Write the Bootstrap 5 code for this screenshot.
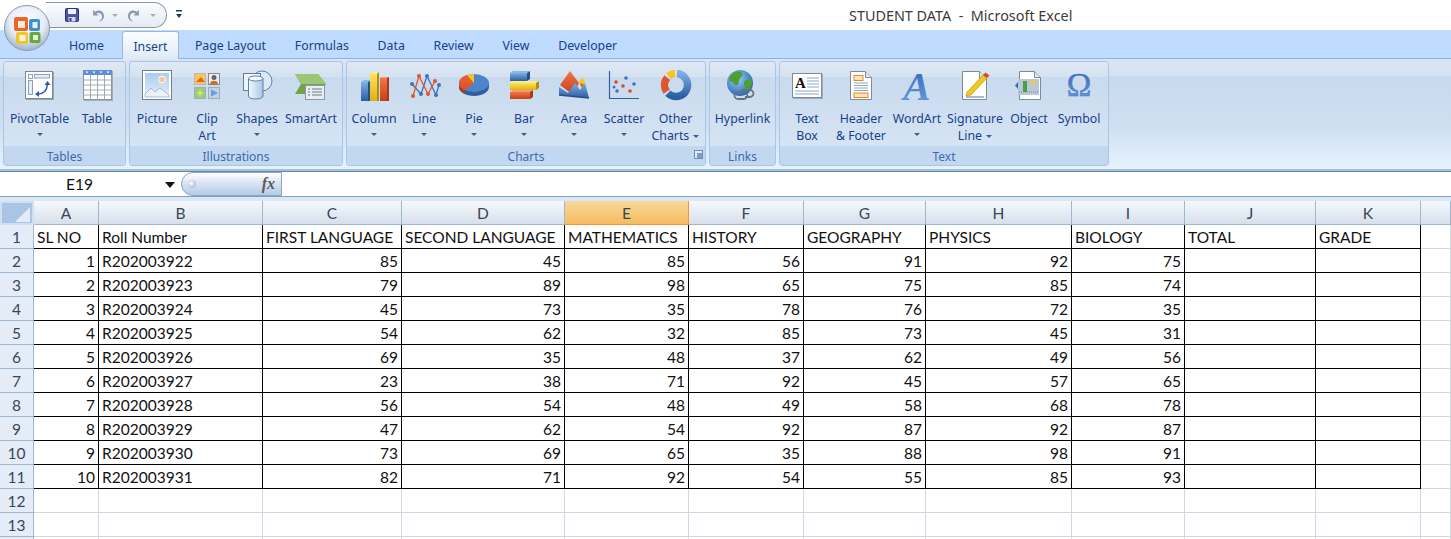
<!doctype html>
<html lang="en">
<head>
<meta charset="utf-8">
<title>STUDENT DATA - Microsoft Excel</title>
<link href="https://cdn.jsdelivr.net/npm/bootstrap@5.3.0/dist/css/bootstrap.min.css" rel="stylesheet">
<style>
html,body{height:539px;overflow:hidden;background:#fff;}
body{font-family:"Noto Sans","Open Sans",sans-serif;}
.titlebar{height:30px;background:#fff;position:relative;}
.title-text{position:absolute;left:849px;top:6px;font-size:14.4px;line-height:20px;color:#3b3b3b;white-space:nowrap;}
.office-btn{position:absolute;left:4px;top:5px;width:46px;height:46px;border-radius:50%;z-index:3;border:1px solid #8a97a8;
 background:radial-gradient(circle at 50% 35%,#ffffff 0,#e6edf6 48%,#a9bbd0 76%,#eef3f9 100%);
 display:flex;align-items:center;justify-content:center;}
.qat{position:absolute;left:46px;top:2px;width:121px;height:26px;border:1px solid #8a97a8;border-left:0;border-radius:0 14px 14px 0;background:linear-gradient(#fbfcfe,#e3ebf5);padding-left:19px;}
.qat-more{position:absolute;left:175px;top:9px;}
.qat .q-undo{margin-left:13px;}
.qat .q-redo{margin-left:10px;}
.qat .caret-d{border-top-color:#a3adba;}
.qat .q-c1{margin:0 0 0 8px;}
.qat .q-c2{margin:0 0 0 10px;}
.tabs{height:28px;background:#bfdbff;padding-left:54.6px;align-items:flex-end;}
.rtab{height:28px;font-size:12.3px;line-height:31px;color:#15428b;padding:0 14.4px;white-space:nowrap;}
.rtab.active{position:relative;z-index:2;height:28px;margin:0 2px -1px 4px;line-height:29px;background:linear-gradient(#fafdff,#dfeaf7);border:1px solid #9ab8d9;border-bottom:0;border-radius:3px 3px 0 0;padding:0 10px;}
.ribbon{height:113px;background:linear-gradient(#d9e5f3 0,#d6e2f1 15%,#c7d9ee 16%,#cfdff1 60%,#e5f3fd 100%);border-top:1px solid #8db2e3;border-bottom:2px solid #a5c0dc;padding:2px 0 0 3px;gap:3px;}
.rgroup{height:105px;background:linear-gradient(#dfe8f5 0,#d6e2f1 14%,#c9daee 15%,#d9e7f6 100%);border:1px solid #a9c6e6;border-radius:3px;overflow:hidden;position:relative;}
.rgroup-body{height:84px;}
.rlabel{height:19px;background:#c2d8f0;text-align:center;font-size:12px;line-height:21px;color:#3e6aaa;position:relative;}
.launcher{position:absolute;right:2px;top:4px;}
.rbtn{flex:0 0 auto;display:flex;flex-direction:column;align-items:center;font-size:12.3px;line-height:17px;color:#15428b;text-align:center;padding-top:5px;}
.rbtn svg{display:block;height:36px;width:36px;margin-bottom:7px;overflow:visible;}
.rbtn .cap{white-space:nowrap;}
.caret-d{display:inline-block;width:0;height:0;border:3px solid transparent;border-top:3px solid #3f5f8f;border-bottom:0;vertical-align:middle;margin:0 0 1px 1px;}
.caret-d.below{margin:6px 0 0;}
.fbar{height:30px;background:#dbe7f5;}
.fbar-row{height:26px;background:#fff;border-top:1px solid #6b87a6;border-bottom:1px solid #7f9fc4;}
.namebox{width:181px;font-family:Lato,sans-serif;font-size:15.5px;line-height:25px;padding-left:66px;position:relative;color:#111;}
.namebox::after{content:"";position:absolute;left:165px;top:10px;border:5px solid transparent;border-top:6px solid #111;border-bottom:0;}
.fx-pill{width:101px;height:24px;border:1px solid #8ba6c6;border-radius:12px 0 0 12px;background:linear-gradient(#fff,#d5e2f3 50%,#b4cbe7 100%);position:relative;}
.fx-dot{position:absolute;left:6px;top:7px;width:8px;height:8px;border-radius:50%;background:radial-gradient(circle at 40% 40%,#fff,#97a4b3);}
.fx{position:absolute;right:6px;top:-1px;font-family:"Liberation Serif",serif;font-style:italic;font-weight:700;font-size:16px;line-height:23px;color:#5b5b5b;}
.sheet{margin:0;border-collapse:separate;border-spacing:0;table-layout:fixed;width:1451px;font-family:Lato,sans-serif;font-size:15.5px;color:#111;}
.sheet th,.sheet td{padding:0 3px;height:24px;line-height:22px;border-right:1px solid #d0d7e5;border-bottom:1px solid #d0d7e5;white-space:nowrap;overflow:hidden;font-weight:400;box-sizing:border-box;}
.sheet thead th{text-align:center;background:linear-gradient(#f6f9fd,#d6dfeb);border-right:1px solid #9eb6ce;border-bottom:1px solid #9eb6ce;color:#3a4656;}
.sheet thead th.sel{background:linear-gradient(#f8d99b,#f3bc5f);border-left:0;border-right:1px solid #f29536;border-bottom:1px solid #f29536;}
.sheet thead th.corner{background:#a9c4e6;border:2px solid #cfe0f3;position:relative;}
.corner-tri{position:absolute;right:2px;bottom:1px;border-style:solid;border-width:0 0 15px 15px;border-color:transparent transparent #e4ecf6 transparent;}
.sheet tbody th{text-align:center;background:#e4ecf7;border-right:1px solid #9eb6ce;border-bottom:1px solid #9eb6ce;color:#3a4656;padding:0;}
.sheet .n{text-align:right;}
.sheet .d{border-right:1px solid #000;border-bottom:1px solid #000;}
</style>
</head>
<body>
<svg width="0" height="0" class="d-block" aria-hidden="true"><defs>
  <linearGradient id="gBlue" x1="0" y1="0" x2="0" y2="1"><stop offset="0" stop-color="#7eaee4"/><stop offset="1" stop-color="#2c5f9f"/></linearGradient>
  <linearGradient id="gYel" x1="0" y1="0" x2="0" y2="1"><stop offset="0" stop-color="#fbe45a"/><stop offset="1" stop-color="#e2ae12"/></linearGradient>
  <linearGradient id="gRed" x1="0" y1="0" x2="0" y2="1"><stop offset="0" stop-color="#f0764a"/><stop offset="1" stop-color="#c63f18"/></linearGradient>
  <linearGradient id="gSky" x1="0" y1="0" x2="0" y2="1"><stop offset="0" stop-color="#a9ccf2"/><stop offset="1" stop-color="#e3eefa"/></linearGradient>
  <radialGradient id="gGlobe" cx=".4" cy=".35" r=".7"><stop offset="0" stop-color="#9ad0f5"/><stop offset="1" stop-color="#1f62b0"/></radialGradient>
  <linearGradient id="gCyl" x1="0" y1="0" x2="1" y2="0"><stop offset="0" stop-color="#f2f7fd"/><stop offset="1" stop-color="#a9c6e8"/></linearGradient>
  <linearGradient id="gA" x1="0" y1="0" x2="0" y2="1"><stop offset="0" stop-color="#2f66b5"/><stop offset="1" stop-color="#6fa0dc"/></linearGradient>
</defs></svg>
<div class="titlebar">
  <div class="office-btn">
    <svg width="34" height="34" viewBox="0 0 34 34">
      <rect x="4" y="6" width="14" height="14" rx="2" fill="#e8672a"/><rect x="8" y="10" width="7" height="7" fill="#fbe9dc"/>
      <rect x="19" y="8" width="11" height="12" rx="2" fill="#3f8fd2"/><rect x="22.500" y="11" width="5" height="6" fill="#e4f1fb"/>
      <rect x="6" y="21" width="12" height="12" rx="2" fill="#f2c230"/><rect x="9.500" y="24" width="6" height="6" fill="#fff7d8"/>
      <rect x="19.500" y="21" width="11" height="11" rx="2" fill="#69a83a"/><rect x="23" y="24" width="5" height="5" fill="#e5f3d6"/>
    </svg>
  </div>
  <div class="qat d-flex align-items-center">
    <svg width="14" height="14" viewBox="0 0 14 14"><rect x=".5" y=".5" width="13" height="13" rx="1" fill="#4a55a8" stroke="#2b3272"/><rect x="3" y="1" width="8" height="5" fill="#eef1fb"/><rect x="3.500" y="9" width="7" height="4.500" fill="#d6d9e8"/><rect x="4.500" y="10" width="2" height="3" fill="#333a80"/></svg>
    <svg class="q-undo" width="12" height="13" viewBox="0 0 12 13"><path d="M1 1v5.500h5.500L4.500 4.500C7 3 10 4.500 10 7.500c0 2-1 3.500-3 5 3.500-.5 5-3 5-5.500C12 2 7 0 3.200 2.800z" fill="#8b9bb0"/></svg>
    <span class="caret-d q-c1"></span>
    <svg class="q-redo" width="12" height="13" viewBox="0 0 12 13"><path d="M11 1v5.500H5.500l2-2C5 3 2 4.500 2 7.500c0 2 1 3.500 3 5C1.500 12 0 9.500 0 7 0 2 5 0 8.800 2.800z" fill="#8b9bb0"/></svg>
    <span class="caret-d q-c2"></span>
  </div>
  <svg class="qat-more" width="8" height="11" viewBox="0 0 8 11"><rect x="1" y="1" width="6" height="1.500" fill="#22386a"/><path d="M1 5h6L4 9z" fill="#22386a"/></svg>
  <div class="title-text">STUDENT DATA&nbsp; -&nbsp; Microsoft Excel</div>
</div>

<div class="tabs d-flex">
  <div class="rtab">Home</div>
  <div class="rtab active">Insert</div>
  <div class="rtab">Page Layout</div>
  <div class="rtab">Formulas</div>
  <div class="rtab">Data</div>
  <div class="rtab">Review</div>
  <div class="rtab">View</div>
  <div class="rtab">Developer</div>
</div>

<div class="ribbon d-flex">
  <!-- Tables -->
  <div class="rgroup" style="width:123px">
    <div class="rgroup-body d-flex">
      <div class="rbtn" style="width:71px"><svg viewBox="0 0 36 36"><rect x="4" y="5" width="28" height="28" fill="#9aa3ae"/><rect x="3.500" y="4.500" width="27" height="27" fill="#fff" stroke="#7f8894"/><rect x="6.500" y="7.500" width="4" height="4" fill="#fff" stroke="#8aa0c0"/><rect x="12.500" y="7.500" width="15" height="3.500" fill="#e6eef8" stroke="#8aa0c0"/><rect x="6.500" y="13.500" width="4" height="14" fill="#e6eef8" stroke="#8aa0c0"/><path d="M16 27c6 0 9-4 9.500-10" fill="none" stroke="#2d5a9c" stroke-width="1.500"/><path d="M22.500 18l3-4 3 4zM17 24l-4 3 4 3z" fill="#2d5a9c"/></svg><span class="cap">PivotTable</span><span class="caret-d below"></span></div>
      <div class="rbtn" style="width:44px"><svg viewBox="0 0 36 36"><rect x="5" y="4" width="29" height="30" fill="#a3abb5"/><rect x="4.500" y="3.500" width="28" height="29" fill="#fff" stroke="#8a9099"/><rect x="4" y="3" width="29" height="5" fill="#5b8fd6"/><path d="M6.500 4.500h3l-1.500 2zM13.500 4.500h3l-1.500 2zM20.500 4.500h3l-1.500 2zM27.500 4.500h3l-1.500 2z" fill="#fff"/><path d="M4 13h29M4 18h29M4 23h29M4 28h29M11.500 8v25M18.500 8v25M25.500 8v25" stroke="#a3a8b0" fill="none"/></svg><span class="cap">Table</span></div>
    </div>
    <div class="rlabel">Tables</div>
  </div>
  <!-- Illustrations -->
  <div class="rgroup" style="width:214px">
    <div class="rgroup-body d-flex">
      <div class="rbtn" style="width:54px"><svg viewBox="0 0 36 36"><rect x="3.500" y="3.500" width="29" height="29" fill="#fff" stroke="#6f7d8c"/><rect x="6" y="6" width="24" height="24" fill="url(#gSky)"/><circle cx="23" cy="12.500" r="3.500" fill="#f5c79a" stroke="#fff"/><path d="M6 27l6-6 4 4 5-4 9 7v2H6z" fill="#eaf1f9" stroke="#8aa6c8" stroke-width=".7"/></svg><span class="cap">Picture</span></div>
      <div class="rbtn" style="width:46px"><svg viewBox="0 0 36 36"><rect x="5.500" y="6.500" width="11" height="11" fill="#f6c558" stroke="#bbb"/><path d="M7 15l5-5 4 5z" fill="#e8632a"/><rect x="19.500" y="6.500" width="11" height="11" fill="#eee" stroke="#888"/><circle cx="25" cy="10.500" r="2.500" fill="#666"/><path d="M21 17c0-4.500 8-4.500 8 0z" fill="#d8682a"/><rect x="5.500" y="20.500" width="11" height="11" fill="#8fcf86" stroke="#aaa"/><path d="M11 22l1 3 3 1-3 1-1 3-1-3-3-1 3-1z" fill="#f6e54c"/><rect x="19.500" y="20.500" width="11" height="11" fill="#b8d4f2" stroke="#aaa"/><path d="M22 22.500l7 3.500-7 3.500z" fill="#6b9ad6"/></svg><span class="cap">Clip</span><span class="cap">Art</span></div>
      <div class="rbtn" style="width:54px"><svg viewBox="0 0 36 36"><circle cx="23" cy="14" r="10" fill="#dbe8f7" stroke="#5f7fa8"/><rect x="4.500" y="6.500" width="17" height="17" fill="#eef4fb" stroke="#5f7fa8"/><path d="M9.500 11.500V29c0 4 14.500 4 14.500 0V11.500z" fill="url(#gCyl)" stroke="#5f7fa8"/><ellipse cx="16.750" cy="11.500" rx="7.250" ry="2.500" fill="#f7fafe" stroke="#5f7fa8"/></svg><span class="cap">Shapes</span><span class="caret-d below"></span></div>
      <div class="rbtn" style="width:54px"><svg viewBox="0 0 36 36"><path d="M2 7h23l8 10-8 10H2l6-10z" fill="#6fa544"/><path d="M2 7h23l8 10H8z" fill="#9cc676"/><rect x="12.500" y="18.500" width="19" height="14" fill="#e8eef3" stroke="#8d9aa5"/><path d="M15 22h2m2 0h10M15 25h2m2 0h10M15 28h2m2 0h10" stroke="#6a7a88"/></svg><span class="cap">SmartArt</span></div>
    </div>
    <div class="rlabel">Illustrations</div>
  </div>
  <!-- Charts -->
  <div class="rgroup" style="width:360px">
    <div class="rgroup-body d-flex">
      <div class="rbtn" style="width:54px"><svg viewBox="0 0 36 36"><rect x="5" y="15" width="7" height="19" fill="url(#gBlue)"/><path d="M5 15l3-2h7l-3 2z" fill="#8ab6e8"/><path d="M12 15l2-1v20h-2z" fill="#234f8a"/><rect x="14" y="7" width="7" height="27" fill="url(#gYel)"/><path d="M14 7l2-2h7l-2 2z" fill="#fbec8a"/><path d="M21 7l2-2v29h-2z" fill="#b28e10"/><rect x="24" y="11" width="7" height="23" fill="url(#gRed)"/><path d="M23 11l3-1h7l-2 1z" fill="#f59a70"/><path d="M31 11l2-1v24h-2z" fill="#a43a18"/></svg><span class="cap">Column</span><span class="caret-d below"></span></div>
      <div class="rbtn" style="width:46px"><svg viewBox="0 0 36 36"><path d="M6 17l9 10 6-18 9 19 3-10" fill="none" stroke="#3c74b8" stroke-width="1.300"/><path d="M7 29l6-20 9 18 7-13" fill="none" stroke="#e0562c" stroke-width="1.300"/><g fill="#3c74b8"><circle cx="6" cy="17" r="2"/><circle cx="15" cy="27" r="2"/><circle cx="21" cy="9" r="2"/><circle cx="30" cy="28" r="2"/><circle cx="33" cy="18" r="2"/></g><g fill="#e0562c"><circle cx="7" cy="29" r="2"/><circle cx="13" cy="9" r="2"/><circle cx="22" cy="27" r="2"/><circle cx="29" cy="14" r="2"/></g></svg><span class="cap">Line</span><span class="caret-d below"></span></div>
      <div class="rbtn" style="width:54px"><svg viewBox="0 0 36 36"><path d="M3 16v4c0 5 7 9 15 9s15-4 15-9v-4z" fill="#2f5f9e"/><path d="M3 16v4c0 3 2 5 6 7l0-4z" fill="#b03c18"/><ellipse cx="18" cy="16" rx="15" ry="9" fill="#4d86c8"/><path d="M18 16L3 16a15 9 0 0 0 6 7z" fill="#e0562c"/><path d="M18 16L3 16a15 9 0 0 1 8-8z" fill="#e85c2e"/><path d="M18 16L11 8a15 9 0 0 1 7-1z" fill="#f3c81e"/></svg><span class="cap">Pie</span><span class="caret-d below"></span></div>
      <div class="rbtn" style="width:46px"><svg viewBox="0 0 36 36"><rect x="4" y="6" width="17" height="8" fill="url(#gBlue)"/><path d="M4 6l3-2h17l-3 2z" fill="#8ab6e8"/><path d="M21 6l3-2v8l-3 2z" fill="#234f8a"/><rect x="4" y="16" width="26" height="7" fill="url(#gYel)"/><path d="M4 16l3-2h26l-3 2z" fill="#fbec8a"/><path d="M30 16l3-2v7l-3 2z" fill="#b28e10"/><rect x="4" y="25" width="20" height="7" fill="url(#gRed)"/><path d="M4 25l3-2h20l-3 2z" fill="#f59a70"/><path d="M24 25l3-2v7l-3 2z" fill="#a43a18"/></svg><span class="cap">Bar</span><span class="caret-d below"></span></div>
      <div class="rbtn" style="width:54px"><svg viewBox="0 0 36 36"><path d="M4 18L14 4l9 12-6 12z" fill="url(#gRed)"/><path d="M23 14l4-3 3 7-5 2z" fill="#f3c81e"/><path d="M24 16l5 2-2 6z" fill="#e0562c"/><path d="M3 20l9 6 7-10 5 7 5-7 4 15-30-3z" fill="url(#gBlue)"/><path d="M3 28l30 3" stroke="#234f8a" stroke-width="1.500"/></svg><span class="cap">Area</span><span class="caret-d below"></span></div>
      <div class="rbtn" style="width:46px"><svg viewBox="0 0 36 36"><path d="M3.500 4v27.500H33" fill="none" stroke="#2f5f9e" stroke-width="1.200"/><g fill="#d9482a"><circle cx="10" cy="15" r="1.800"/><circle cx="17" cy="19" r="1.800"/><circle cx="24" cy="24" r="1.800"/></g><g fill="#3c74b8"><circle cx="20" cy="11" r="1.800"/><circle cx="11" cy="24" r="1.800"/><circle cx="28" cy="17" r="1.800"/><circle cx="8" cy="20" r="1.500"/></g></svg><span class="cap">Scatter</span><span class="caret-d below"></span></div>
      <div class="rbtn" style="width:57px"><svg viewBox="0 0 36 36"><path d="M19 6.500A11.500 11.500 0 1 1 9.900 26.100" fill="none" stroke="url(#gBlue)" stroke-width="7.500"/><path d="M8.600 24.600A11.500 11.500 0 0 1 9.200 10.600" fill="none" stroke="#e0562c" stroke-width="7.500"/><path d="M10.600 9.200A11.500 11.500 0 0 1 17 6.550" fill="none" stroke="#f3c81e" stroke-width="7.500"/></svg><span class="cap">Other</span><span class="cap">Charts <span class="caret-d"></span></span></div>
    </div>
    <div class="rlabel">Charts<svg class="launcher" width="9" height="9" viewBox="0 0 9 9"><rect x=".5" y=".5" width="8" height="8" fill="#dfe9f5" stroke="#6f8eb5"/><rect x="3" y="3" width="5" height="5" fill="#7f9cc2"/></svg></div>
  </div>
  <!-- Links -->
  <div class="rgroup" style="width:67px">
    <div class="rgroup-body d-flex">
      <div class="rbtn w-100"><svg viewBox="0 0 36 36"><circle cx="15" cy="16" r="13" fill="url(#gGlobe)"/><path d="M5 9c4-5 9-6 12-3 2 3-3 5-3 8 0 4-3 6-5 3-1-2-3-3-5-3zM19 15c3-4 7-3 8-1 0 5-2 9-5 11-2-1-1-5-3-7z" fill="#4f9e34"/><path d="M16 25h-3a3.500 3.500 0 0 0 0 7h6a3.500 3.500 0 0 0 3-5M20 30h5a3.500 3.500 0 0 0 0-7h-6a3.500 3.500 0 0 0-3 5" fill="none" stroke="#68727e" stroke-width="1.800"/></svg><span class="cap">Hyperlink</span></div>
    </div>
    <div class="rlabel">Links</div>
  </div>
  <!-- Text -->
  <div class="rgroup" style="width:330px">
    <div class="rgroup-body d-flex">
      <div class="rbtn" style="width:54px"><svg viewBox="0 0 36 36"><rect x="4" y="7" width="30" height="25" fill="#a3abb5"/><rect x="3.500" y="6.500" width="29" height="24" fill="#fff" stroke="#7d8a98"/><text x="6" y="21" font-family="Liberation Serif,serif" font-size="15" font-weight="700" fill="#111">A</text><path d="M18 11h12M18 14h12M18 17h12M18 20h12M6 24h24M6 27h24" stroke="#8aa6c8"/></svg><span class="cap">Text</span><span class="cap">Box</span></div>
      <div class="rbtn" style="width:54px"><svg viewBox="0 0 36 36"><path d="M7.500 4.500h15l6 6v22h-21z" fill="#fff" stroke="#7d8a98"/><path d="M22.500 4.500v6h6" fill="#dfe6ee" stroke="#7d8a98"/><rect x="11" y="8.500" width="9" height="5" fill="#fde3b8" stroke="#e4892a"/><path d="M11 16h14M11 18.500h14M11 21h14M11 23.500h14" stroke="#8aa6c8"/><rect x="11" y="26" width="14" height="4.500" fill="#fde3b8" stroke="#e4892a"/></svg><span class="cap">Header</span><span class="cap">&amp; Footer</span></div>
      <div class="rbtn" style="width:58px"><svg viewBox="0 0 36 36"><text x="18" y="33" text-anchor="middle" font-family="Liberation Serif,serif" font-size="41" font-style="italic" font-weight="700" fill="url(#gA)">A</text></svg><span class="cap">WordArt</span><span class="caret-d below"></span></div>
      <div class="rbtn" style="width:58px"><svg viewBox="0 0 36 36"><path d="M5.500 4.500h17l7 7v21h-24z" fill="#fff" stroke="#7d8a98"/><path d="M22.500 4.500v7h7" fill="#dfe6ee" stroke="#7d8a98"/><path d="M10 25L26 8l4 3-16 17-5 1z" fill="#f3c81e" stroke="#b28e10" stroke-width=".6"/><path d="M26 8l2.500-2.500 4 3L30 11z" fill="#d9482a"/><path d="M9 30h18" stroke="#5d7596"/></svg><span class="cap">Signature</span><span class="cap">Line <span class="caret-d"></span></span></div>
      <div class="rbtn" style="width:50px"><svg viewBox="0 0 36 36"><path d="M8.500 4.500h15l6 6v22h-21z" fill="#fff" stroke="#7d8a98"/><path d="M23.500 4.500v6h6" fill="#dfe6ee" stroke="#7d8a98"/><rect x="7" y="12" width="21" height="16" fill="#b8c8d8"/><path d="M7 15l-3 3.500L7 22z" fill="#2d6cc0"/><rect x="12" y="14" width="4" height="11" fill="#4c9e3e"/><circle cx="22" cy="15.500" r="2.500" fill="#f3c84e"/><path d="M8 25h19" stroke="#7a8a9a" stroke-dasharray="1 1"/></svg><span class="cap">Object</span></div>
      <div class="rbtn" style="width:50px"><svg viewBox="0 0 36 36"><text x="18" y="29" text-anchor="middle" font-family="Liberation Serif,serif" font-size="33" fill="url(#gA)" stroke="#3f76bf" stroke-width=".5">Ω</text></svg><span class="cap">Symbol</span></div>
    </div>
    <div class="rlabel">Text</div>
  </div>
</div>

<div class="fbar">
  <div class="fbar-row d-flex">
    <div class="namebox">E19</div>
    <div class="fx-pill"><span class="fx-dot"></span><span class="fx">fx</span></div>
    <div class="flex-grow-1"></div>
  </div>
</div>

<table class="sheet">
  <colgroup>
    <col style="width:34px"><col style="width:65px"><col style="width:164px"><col style="width:139px"><col style="width:163px"><col style="width:124px"><col style="width:115px"><col style="width:122px"><col style="width:146px"><col style="width:113px"><col style="width:131px"><col style="width:105px"><col>
  </colgroup>
  <thead>
    <tr><th class="corner"><span class="corner-tri"></span></th><th>A</th><th>B</th><th>C</th><th>D</th><th class="sel">E</th><th>F</th><th>G</th><th>H</th><th>I</th><th>J</th><th>K</th><th></th></tr>
  </thead>
  <tbody>
    <tr><th>1</th><td class="d">SL NO</td><td class="d">Roll Number</td><td class="d">FIRST LANGUAGE</td><td class="d">SECOND LANGUAGE</td><td class="d">MATHEMATICS</td><td class="d">HISTORY</td><td class="d">GEOGRAPHY</td><td class="d">PHYSICS</td><td class="d">BIOLOGY</td><td class="d">TOTAL</td><td class="d">GRADE</td><td></td></tr>
    <tr><th>2</th><td class="d n">1</td><td class="d">R202003922</td><td class="d n">85</td><td class="d n">45</td><td class="d n">85</td><td class="d n">56</td><td class="d n">91</td><td class="d n">92</td><td class="d n">75</td><td class="d"></td><td class="d"></td><td></td></tr>
    <tr><th>3</th><td class="d n">2</td><td class="d">R202003923</td><td class="d n">79</td><td class="d n">89</td><td class="d n">98</td><td class="d n">65</td><td class="d n">75</td><td class="d n">85</td><td class="d n">74</td><td class="d"></td><td class="d"></td><td></td></tr>
    <tr><th>4</th><td class="d n">3</td><td class="d">R202003924</td><td class="d n">45</td><td class="d n">73</td><td class="d n">35</td><td class="d n">78</td><td class="d n">76</td><td class="d n">72</td><td class="d n">35</td><td class="d"></td><td class="d"></td><td></td></tr>
    <tr><th>5</th><td class="d n">4</td><td class="d">R202003925</td><td class="d n">54</td><td class="d n">62</td><td class="d n">32</td><td class="d n">85</td><td class="d n">73</td><td class="d n">45</td><td class="d n">31</td><td class="d"></td><td class="d"></td><td></td></tr>
    <tr><th>6</th><td class="d n">5</td><td class="d">R202003926</td><td class="d n">69</td><td class="d n">35</td><td class="d n">48</td><td class="d n">37</td><td class="d n">62</td><td class="d n">49</td><td class="d n">56</td><td class="d"></td><td class="d"></td><td></td></tr>
    <tr><th>7</th><td class="d n">6</td><td class="d">R202003927</td><td class="d n">23</td><td class="d n">38</td><td class="d n">71</td><td class="d n">92</td><td class="d n">45</td><td class="d n">57</td><td class="d n">65</td><td class="d"></td><td class="d"></td><td></td></tr>
    <tr><th>8</th><td class="d n">7</td><td class="d">R202003928</td><td class="d n">56</td><td class="d n">54</td><td class="d n">48</td><td class="d n">49</td><td class="d n">58</td><td class="d n">68</td><td class="d n">78</td><td class="d"></td><td class="d"></td><td></td></tr>
    <tr><th>9</th><td class="d n">8</td><td class="d">R202003929</td><td class="d n">47</td><td class="d n">62</td><td class="d n">54</td><td class="d n">92</td><td class="d n">87</td><td class="d n">92</td><td class="d n">87</td><td class="d"></td><td class="d"></td><td></td></tr>
    <tr><th>10</th><td class="d n">9</td><td class="d">R202003930</td><td class="d n">73</td><td class="d n">69</td><td class="d n">65</td><td class="d n">35</td><td class="d n">88</td><td class="d n">98</td><td class="d n">91</td><td class="d"></td><td class="d"></td><td></td></tr>
    <tr><th>11</th><td class="d n">10</td><td class="d">R202003931</td><td class="d n">82</td><td class="d n">71</td><td class="d n">92</td><td class="d n">54</td><td class="d n">55</td><td class="d n">85</td><td class="d n">93</td><td class="d"></td><td class="d"></td><td></td></tr>
    <tr><th>12</th><td></td><td></td><td></td><td></td><td></td><td></td><td></td><td></td><td></td><td></td><td></td><td></td></tr>
    <tr><th>13</th><td></td><td></td><td></td><td></td><td></td><td></td><td></td><td></td><td></td><td></td><td></td><td></td></tr>
    <tr><th></th><td></td><td></td><td></td><td></td><td></td><td></td><td></td><td></td><td></td><td></td><td></td><td></td></tr>
  </tbody>
</table>
<script src="https://cdn.jsdelivr.net/npm/bootstrap@5.3.0/dist/js/bootstrap.bundle.min.js"></script>
</body>
</html>
